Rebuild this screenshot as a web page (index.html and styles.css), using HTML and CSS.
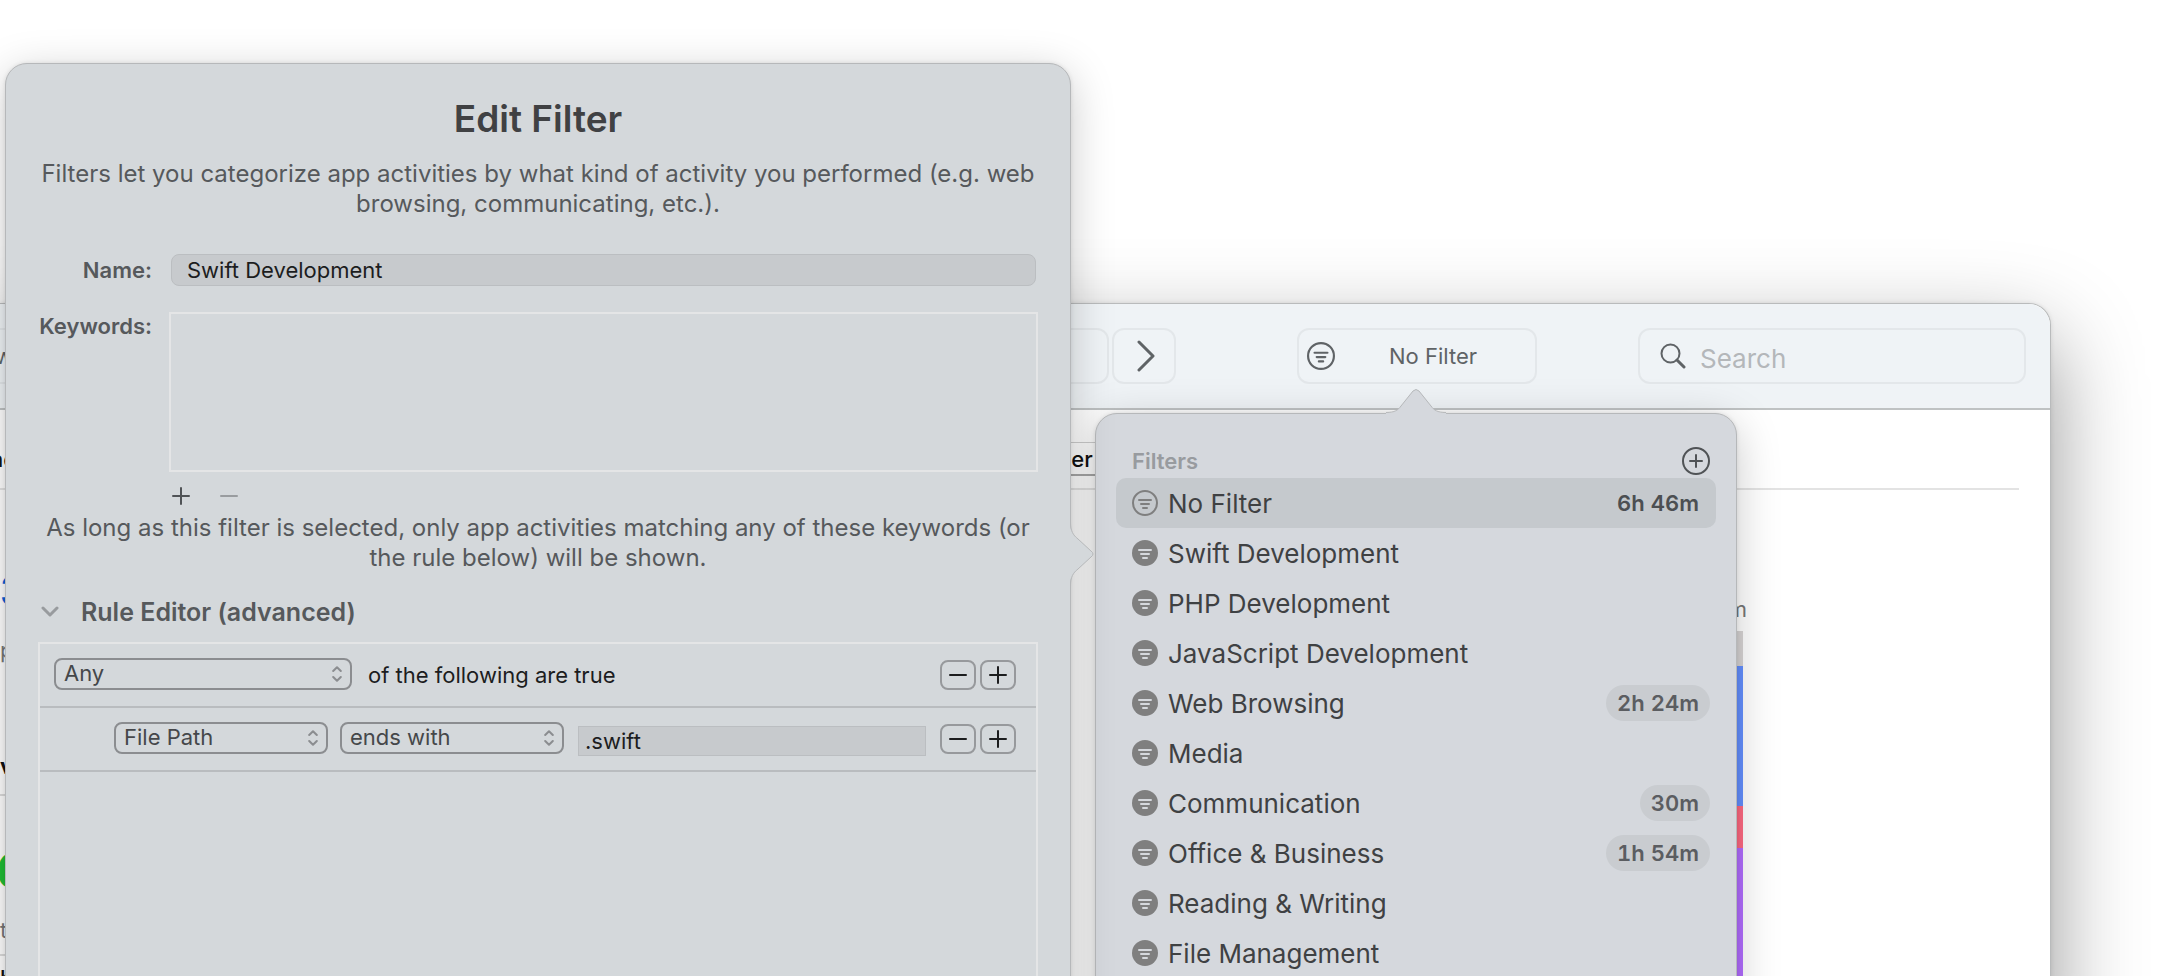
FILE: index.html
```html
<!DOCTYPE html>
<html lang="en">
  <head>
    <meta charset="utf-8">
    <title>Edit Filter</title>
    <meta name="viewport" content="width=device-width, initial-scale=1">
    <link rel="stylesheet" href="styles.css">
  </head>

  <body>
    <!-- shared icons -->
    <svg class="sprite" aria-hidden="true">
      <symbol id="icon-filter" viewBox="0 0 26 26">
        <circle cx="13" cy="13" r="12" fill="none" stroke="currentColor" stroke-width="2"/>
        <path d="M7 10h12M9 14h8M11 18h4" fill="none" stroke="currentColor" stroke-width="2" stroke-linecap="round"/>
      </symbol>
      <symbol id="icon-filter-fill" viewBox="0 0 26 26">
        <circle cx="13" cy="13" r="13" fill="currentColor"/>
        <path d="M7 10h12M9 14h8M11 18h4" fill="none" stroke="#d5d8dd" stroke-width="2" stroke-linecap="round"/>
      </symbol>
      <symbol id="icon-plus" viewBox="0 0 18 18">
        <path d="M9 1v16M1 9h16" fill="none" stroke="currentColor" stroke-width="2" stroke-linecap="round"/>
      </symbol>
      <symbol id="icon-minus" viewBox="0 0 18 18">
        <path d="M1 9h16" fill="none" stroke="currentColor" stroke-width="2" stroke-linecap="round"/>
      </symbol>
      <symbol id="icon-updown" viewBox="0 0 10 16">
        <path d="M1.200 5L5 1.200 8.800 5M1.200 11L5 14.800 8.800 11" fill="none" stroke="currentColor" stroke-width="2" stroke-linecap="round" stroke-linejoin="round"/>
      </symbol>
    </svg>

    <main class="window">
      <header class="toolbar">
        <button class="tool tool-edge">w</button>
        <div class="tool-group">
          <button class="tool tool-range" aria-label="Date range"></button>
          <button class="tool tool-next" aria-label="Next">
            <svg width="18" height="32" viewBox="0 0 18 32"><path d="M2 2l14 14L2 30" fill="none" stroke="currentColor" stroke-width="3" stroke-linecap="round" stroke-linejoin="round"/></svg>
          </button>
        </div>
        <button class="tool tool-filter">
          <svg width="28" height="28"><use href="#icon-filter"/></svg>
          <span>No Filter</span>
        </button>
        <div class="tool tool-search">
          <svg width="26" height="26" viewBox="0 0 26 26"><circle cx="10.500" cy="10.500" r="9" fill="none" stroke="currentColor" stroke-width="2"/><path d="M17 17l7 7" stroke="currentColor" stroke-width="3" stroke-linecap="round"/></svg>
          <input type="search" placeholder="Search" aria-label="Search">
        </div>
      </header>

      <nav class="tabs">
        <span class="tab-edge">ne</span>
        <button class="tab">er</button>
      </nav>

      <div class="report">
        <div class="summary">
          <p class="number blue">3</p>
          <p class="caption">p</p>
          <p class="heading">v</p>
          <p class="number green">6</p>
          <p class="caption ruled">t</p>
          <p class="heading last">h</p>
        </div>
        <div class="chart">
          <p class="chart-label">m</p>
          <div class="bar">
            <span class="part gray" style="height: 35px"></span>
            <span class="part blue" style="height: 140px"></span>
            <span class="part red" style="height: 42px"></span>
            <span class="part purple"></span>
          </div>
        </div>
      </div>
    </main>

    <section class="popover filters">
      <svg class="arrow-up" width="60" height="27" viewBox="0 0 60 27">
        <path d="M0 27V25C9 25 12 22 15 18L27 3Q30 0 33 3L45 18C48 22 51 25 60 25V27Z" fill="#d5d8dd"/>
        <path d="M0 24.500C9 24.500 12 22 15 18L27 3Q30 0 33 3L45 18C48 22 51 24.500 60 24.500" fill="none" stroke="#b6b8ba"/>
      </svg>
      <div class="filters-head">
        <h2>Filters</h2>
        <button class="add" aria-label="Add filter">
          <svg width="28" height="28" viewBox="0 0 28 28"><circle cx="14" cy="14" r="13" fill="none" stroke="currentColor" stroke-width="2"/><path d="M14 8v12M8 14h12" stroke="currentColor" stroke-width="2" stroke-linecap="round"/></svg>
        </button>
      </div>
      <ul class="filter-list">
        <li><button class="filter selected"><svg><use href="#icon-filter"/></svg><span class="name">No Filter</span><span class="time">6h 46m</span></button></li>
        <li><button class="filter"><svg><use href="#icon-filter-fill"/></svg><span class="name">Swift Development</span></button></li>
        <li><button class="filter"><svg><use href="#icon-filter-fill"/></svg><span class="name">PHP Development</span></button></li>
        <li><button class="filter"><svg><use href="#icon-filter-fill"/></svg><span class="name">JavaScript Development</span></button></li>
        <li><button class="filter"><svg><use href="#icon-filter-fill"/></svg><span class="name">Web Browsing</span><span class="time">2h 24m</span></button></li>
        <li><button class="filter"><svg><use href="#icon-filter-fill"/></svg><span class="name">Media</span></button></li>
        <li><button class="filter"><svg><use href="#icon-filter-fill"/></svg><span class="name">Communication</span><span class="time">30m</span></button></li>
        <li><button class="filter"><svg><use href="#icon-filter-fill"/></svg><span class="name">Office &amp; Business</span><span class="time">1h 54m</span></button></li>
        <li><button class="filter"><svg><use href="#icon-filter-fill"/></svg><span class="name">Reading &amp; Writing</span></button></li>
        <li><button class="filter"><svg><use href="#icon-filter-fill"/></svg><span class="name">File Management</span></button></li>
      </ul>
    </section>

    <form class="popover editor">
      <svg class="arrow-right" width="26" height="64" viewBox="0 0 26 64">
        <path d="M0 0H1C1 9 4 13 9 17L22 29Q26 32 22 35L9 47C4 51 1 55 1 64H0Z" fill="#d4d8db"/>
        <path d="M1.500 0C1.500 9 4 13 9 17L22 29Q26 32 22 35L9 47C4 51 1.500 55 1.500 64" fill="none" stroke="#b6b8ba"/>
      </svg>
      <h1>Edit Filter</h1>
      <p class="hint">Filters let you categorize app activities by what kind of activity you performed (e.g. web browsing, communicating, etc.).</p>

      <div class="fields">
        <label for="name">Name:</label>
        <input type="text" id="name" class="text-box" value="Swift Development">
        <label for="keywords">Keywords:</label>
        <textarea id="keywords" class="keywords"></textarea>
        <div class="keyword-buttons">
          <button type="button" aria-label="Add keyword"><svg width="18" height="18"><use href="#icon-plus"/></svg></button>
          <button type="button" aria-label="Remove keyword" disabled><svg width="18" height="18"><use href="#icon-minus"/></svg></button>
        </div>
      </div>

      <p class="hint">As long as this filter is selected, only app activities matching any of these keywords (or the rule below) will be shown.</p>

      <h2 class="rule-title">
        <svg width="18" height="12" viewBox="0 0 18 12"><path d="M2 2l7 7 7-7" fill="none" stroke="#989b9e" stroke-width="3" stroke-linecap="round" stroke-linejoin="round"/></svg>
        Rule Editor (advanced)
      </h2>

      <div class="rules">
        <div class="rule">
          <span class="drop match">
            <select id="match" aria-label="Match"><option>Any</option></select>
            <svg width="10" height="16"><use href="#icon-updown"/></svg>
          </span>
          <label for="match">of the following are true</label>
          <span class="rule-buttons">
            <button type="button" aria-label="Remove rule"><svg width="18" height="18"><use href="#icon-minus"/></svg></button>
            <button type="button" aria-label="Add rule"><svg width="18" height="18"><use href="#icon-plus"/></svg></button>
          </span>
        </div>
        <div class="rule nested">
          <span class="drop field">
            <select aria-label="Field"><option>File Path</option></select>
            <svg width="10" height="16"><use href="#icon-updown"/></svg>
          </span>
          <span class="drop operator">
            <select aria-label="Operator"><option>ends with</option></select>
            <svg width="10" height="16"><use href="#icon-updown"/></svg>
          </span>
          <input type="text" class="rule-value" aria-label="Value" value=".swift">
          <span class="rule-buttons">
            <button type="button" aria-label="Remove rule"><svg width="18" height="18"><use href="#icon-minus"/></svg></button>
            <button type="button" aria-label="Add rule"><svg width="18" height="18"><use href="#icon-plus"/></svg></button>
          </span>
        </div>
      </div>
    </form>
  </body>
</html>
```

FILE: styles.css
```css
* { box-sizing: border-box; }
html { height: 100%; }
body {
    position: relative;
    height: 100%;
    margin: 0;
    overflow: hidden;
    background: #fff;
    color: #3f4143;
    font-family: Inter, "Liberation Sans", sans-serif;
    font-size: 22px;
}
h1, h2, p, ul { margin: 0; padding: 0; }
ul { list-style: none; }
button, input, select, textarea { margin: 0; padding: 0; border: none; background: none; color: inherit; font: inherit; }
button { display: flex; align-items: center; justify-content: center; }
svg { display: block; flex: none; }
.sprite { position: absolute; width: 0; height: 0; }

/* main window */
.window {
    position: absolute;
    top: 303px;
    left: 0;
    right: 111px;
    bottom: -60px;
    display: flex;
    flex-direction: column;
    border: 1px solid #b9bbbc;
    border-left: none;
    border-radius: 0 22px 0 0;
    background: #fff;
    box-shadow: 0 36px 90px rgba(0, 0, 0, 0.42), 0 0 4px rgba(0, 0, 0, 0.1);
}
.toolbar {
    display: flex;
    align-items: center;
    height: 106px;
    padding-right: 24px;
    border-bottom: 2px solid #bfc2c3;
    border-radius: 0 22px 0 0;
    background: #eff3f6;
    color: #5f6366;
}
.tool { height: 56px; border: 2px solid #e3e7ea; border-radius: 12px; }
.tool-edge { margin-left: -40px; padding: 0 24px 0 33px; }
.tool-group { display: flex; gap: 3px; margin-left: auto; margin-right: 121px; }
.tool-range { width: 200px; }
.tool-next { width: 64px; }
.tool-next svg { margin-left: 4px; }
.tool-filter { width: 240px; margin-right: 101px; padding: 0 8px; justify-content: flex-start; }
.tool-filter span { flex: 1; padding-left: 4px; text-align: center; }
.tool-search { display: flex; align-items: center; width: 388px; padding: 0 20px; gap: 14px; }
.tool-search input { flex: 1; min-width: 0; padding-top: 4px; outline: none; font-size: 26px; }
.tool-search input::placeholder { color: #b4b7ba; opacity: 1; }

.tabs {
    display: flex;
    align-items: center;
    height: 80px;
    margin-right: 31px;
    padding-bottom: 12px;
    padding-top: 32px;
    border-bottom: 2px solid #e3e3e3;
    color: #111;
    font-weight: 500;
}
.tab-edge { width: 994px; margin-left: -10px; }
.tab { width: 130px; height: 34px; padding-left: 66px; border: 1px solid #cfcfcf; border-bottom: 2px solid #a8a8a8; }

.report { display: flex; flex: 1; justify-content: space-between; padding-right: 303px; }
.summary { padding-top: 70px; }
.number { height: 68px; font-size: 42px; font-weight: 700; line-height: 62px; }
.number.blue { color: #0a62dc; }
.number.green { margin-top: 44px; margin-left: -4px; color: #1fbf35; font-size: 48px; }
.caption { height: 62px; color: #777; line-height: 44px; }
.caption.ruled { height: 48px; border-bottom: 2px solid #dcdcdc; }
.heading { height: 106px; padding-top: 76px; border-bottom: 2px solid #dcdcdc; color: #111; font-weight: 700; line-height: 0; }
.heading.last { height: 40px; padding-top: 22px; border: none; font-weight: 500; }
.chart { display: flex; flex-direction: column; width: 80px; padding-top: 105px; }
.chart-label { height: 36px; color: #777; line-height: 28px; text-align: right; }
.bar { display: flex; flex: 1; flex-direction: column; margin-right: 4px; }
.part.gray { background: #d8d5d5; }
.part.blue { background: #6490ff; }
.part.red { background: #ff6a82; }
.part.purple { flex: 1; background: #b26dff; }

/* popovers */
.popover {
    position: absolute;
    bottom: -60px;
    border: 1px solid #b6b8ba;
    border-radius: 22px;
    box-shadow: 0 10px 44px rgba(0, 0, 0, 0.21), 0 0 4px rgba(0, 0, 0, 0.1);
}
.filters { top: 413px; left: 1095px; width: 642px; padding: 20px; background: #d5d8dd; }
.arrow-up { position: absolute; top: -26px; left: 290px; }
.filters-head { display: flex; align-items: center; justify-content: space-between; height: 44px; padding: 10px 6px 0 16px; }
.filters-head h2 { color: #989b9f; font-size: 22px; font-weight: 600; }
.add { color: #505356; }
.filter { width: 100%; height: 50px; padding: 0 6px 0 16px; gap: 10px; border-radius: 10px; font-size: 26px; }
.filter svg { width: 26px; height: 26px; color: #7f7f7f; }
.filter .name { flex: 1; text-align: left; }
.filter .time { padding: 0 11px; border-radius: 18px; background: #c9ccd0; color: #5b5d61; font-size: 22px; font-weight: 600; font-variant-numeric: tabular-nums; line-height: 36px; }
.filter.selected { background: #c5c9cd; }
.filter.selected .time { background: none; color: #4c4f52; }

.editor { top: 63px; left: 5px; width: 1066px; padding: 33px 32px 0 32px; display: flex; flex-direction: column; background: #d4d8db; color: #56595c; }
.arrow-right { position: absolute; top: 458px; right: -25px; }
.editor h1 { margin-bottom: 18px; color: #404143; font-size: 37px; font-weight: 600; line-height: 44px; text-align: center; }
.hint { font-size: 24px; line-height: 30px; text-align: center; }
.fields { display: grid; grid-template-columns: 114px 1fr; column-gap: 17px; margin-top: 35px; }
.fields label { font-weight: 600; line-height: 32px; text-align: right; }
.fields label[for="keywords"] { line-height: 28px; }
.text-box { height: 32px; margin: 0 2px 26px; padding: 0 15px; border: 1px solid #bbbec1; border-radius: 8px; background: #c7cacd; color: #1c1d1e; }
.keywords { height: 160px; border: 2px solid #e4e5e6; resize: none; }
.keyword-buttons { grid-column: 2; display: flex; align-items: center; gap: 30px; height: 41px; padding-top: 6px; padding-left: 3px; }
.keyword-buttons button { color: #505356; }
.keyword-buttons button:disabled { color: #999c9f; }
.rule-title { display: flex; align-items: center; gap: 22px; margin-top: 21px; padding-left: 3px; font-size: 25px; font-weight: 600; line-height: 36px; }

.rules { flex: 1; margin-top: 12px; border: 2px solid #e4e5e6; }
.rule { display: flex; align-items: center; height: 64px; padding: 0 20px 0 14px; border-bottom: 2px solid #b9bcbf; color: #1c1d1e; }
.rule.nested { padding-left: 74px; }
.drop { position: relative; height: 34px; }
.drop select { width: 100%; height: 32px; padding: 0 8px 2px; border: 2px solid #8b8d90; border-radius: 8px; appearance: none; color: #45474a; line-height: 26px; }
.drop svg { position: absolute; top: 8px; right: 10px; color: #8b8d90; pointer-events: none; }
.drop.match { width: 298px; margin-right: 16px; }
.drop.field { width: 214px; margin-right: 12px; }
.drop.operator { width: 224px; margin-right: 14px; }
.rule-value { flex: 1; min-width: 0; height: 30px; margin: 4px 14px 0 0; padding: 0 6px; border: 1px solid #bbbec1; background: #c7cacd; }
.rule-buttons { display: flex; gap: 4px; margin-left: auto; }
.rule-buttons button { width: 36px; height: 30px; border: 2px solid #97999c; border-radius: 8px; }
```
